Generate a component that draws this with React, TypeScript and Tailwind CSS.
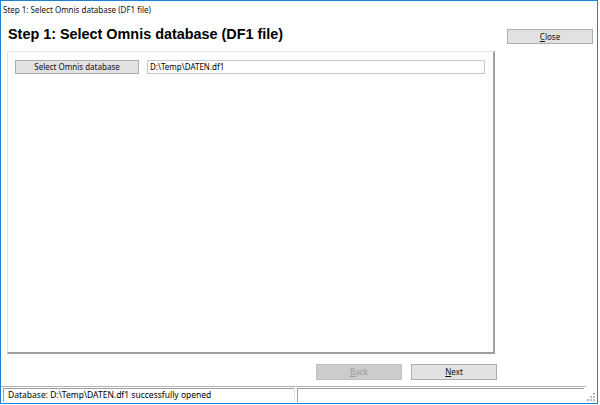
import React from 'react';

const ui = { fontFamily: '"Noto Sans", "Open Sans", sans-serif' };

function WinButton({
    children,
    disabled = false,
    className = '',
}: {
    children: React.ReactNode;
    disabled?: boolean;
    className?: string;
}) {
    return (
        <button
            disabled={disabled}
            className={`flex items-center justify-center border text-[8px] leading-none ${
                disabled
                    ? 'bg-[#cccccc] border-[#bfbfbf] text-[#9a9a9a]'
                    : 'bg-[#e1e1e1] border-[#adadad] text-[#111]'
            } ${className}`}
            style={ui}
        >
            {children}
        </button>
    );
}

export default function App() {
    return (
        <div
            className="w-[598px] h-[404px] bg-white border border-[#1883d7] flex flex-col text-black"
            style={ui}
        >
            {/* window title */}
            <div className="h-[21px] pl-[2px] pt-[3px] text-[8px] leading-[12px] text-[#111]">
                Step 1: Select Omnis database (DF1 file)
            </div>

            <div className="flex pl-[6px]">
                <div className="w-[488px] flex flex-col">
                    <h1
                        className="mt-[3px] text-[14.4px] leading-[18px] font-bold pl-[1px]"
                        style={{ fontFamily: '"Liberation Sans", Arial, sans-serif' }}
                    >
                        Step 1: Select Omnis database (DF1 file)
                    </h1>

                    {/* step panel */}
                    <div className="mt-[8px] h-[303px] border-t border-l border-[#e3e3e3] border-r-2 border-b-2 border-r-[#a0a0a0] border-b-[#a0a0a0] bg-white">
                        <div className="flex items-center pl-[7px] pt-[8px] gap-[8px]">
                            <WinButton className="w-[124px] h-[14px] border-[#8c8c8c]">
                                Select Omnis database
                            </WinButton>
                            <div className="w-[338px] h-[14px] border border-[#c8c8c8] flex items-center pl-[2px] text-[8px] leading-none">
                                D:\Temp\DATEN.df1
                            </div>
                        </div>
                    </div>

                    <div className="flex justify-end gap-[9px] mt-[10px] mr-[-2px]">
                        <WinButton disabled className="w-[86px] h-[16px]">
                            <span><u>B</u>ack</span>
                        </WinButton>
                        <WinButton className="w-[86px] h-[16px]">
                            <span><u>N</u>ext</span>
                        </WinButton>
                    </div>
                </div>

                <div className="ml-[12px] pt-[7px]">
                    <WinButton className="w-[86px] h-[15px]">
                        <span><u>C</u>lose</span>
                    </WinButton>
                </div>
            </div>

            {/* status bar */}
            <div className="mt-auto flex flex-col">
                <div className="h-px bg-[#b4b4b4] w-[585px]" />
                <div className="flex items-end gap-[2px] pl-[2px] pb-[1px] pt-px">
                    <div className="w-[293px] h-[14px] border-t border-l border-[#a0a0a0] border-r border-r-[#e6e6e6] flex items-center pl-[4px] text-[8.5px] leading-none">
                        Database: D:\Temp\DATEN.df1 successfully opened
                    </div>
                    <div className="w-[288px] h-[14px] border-t border-l border-[#a0a0a0]" />
                    <svg width="10" height="10" viewBox="0 0 10 10" className="ml-auto mr-[1px]">
                        <rect x="7" y="1" width="2" height="2" fill="#b8b8b8" />
                        <rect x="4" y="4" width="2" height="2" fill="#b8b8b8" />
                        <rect x="7" y="4" width="2" height="2" fill="#b8b8b8" />
                        <rect x="1" y="7" width="2" height="2" fill="#b8b8b8" />
                        <rect x="4" y="7" width="2" height="2" fill="#b8b8b8" />
                        <rect x="7" y="7" width="2" height="2" fill="#b8b8b8" />
                    </svg>
                </div>
            </div>
        </div>
    );
}
